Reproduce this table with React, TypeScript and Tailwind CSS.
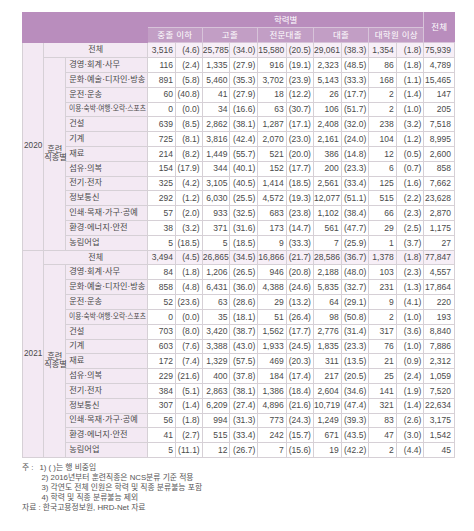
import React from "react";

type Row = [string, string[]];

const y2020Total = ["3,516", "(4.6)", "25,785", "(34.0)", "15,580", "(20.5)", "29,061", "(38.3)", "1,354", "(1.8)", "75,939"];
const y2020: Row[] = [
  ["경영·회계·사무", ["116", "(2.4)", "1,335", "(27.9)", "916", "(19.1)", "2,323", "(48.5)", "86", "(1.8)", "4,789"]],
  ["문화·예술·디자인·방송", ["891", "(5.8)", "5,460", "(35.3)", "3,702", "(23.9)", "5,143", "(33.3)", "168", "(1.1)", "15,465"]],
  ["운전·운송", ["60", "(40.8)", "41", "(27.9)", "18", "(12.2)", "26", "(17.7)", "2", "(1.4)", "147"]],
  ["이용·숙박·여행·오락·스포츠", ["0", "(0.0)", "34", "(16.6)", "63", "(30.7)", "106", "(51.7)", "2", "(1.0)", "205"]],
  ["건설", ["639", "(8.5)", "2,862", "(38.1)", "1,287", "(17.1)", "2,408", "(32.0)", "238", "(3.2)", "7,518"]],
  ["기계", ["725", "(8.1)", "3,816", "(42.4)", "2,070", "(23.0)", "2,161", "(24.0)", "104", "(1.2)", "8,995"]],
  ["재료", ["214", "(8.2)", "1,449", "(55.7)", "521", "(20.0)", "386", "(14.8)", "12", "(0.5)", "2,600"]],
  ["섬유·의복", ["154", "(17.9)", "344", "(40.1)", "152", "(17.7)", "200", "(23.3)", "6", "(0.7)", "858"]],
  ["전기·전자", ["325", "(4.2)", "3,105", "(40.5)", "1,414", "(18.5)", "2,561", "(33.4)", "125", "(1.6)", "7,662"]],
  ["정보통신", ["292", "(1.2)", "6,030", "(25.5)", "4,572", "(19.3)", "12,077", "(51.1)", "515", "(2.2)", "23,628"]],
  ["인쇄·목재·가구·공예", ["57", "(2.0)", "933", "(32.5)", "683", "(23.8)", "1,102", "(38.4)", "66", "(2.3)", "2,870"]],
  ["환경·에너지·안전", ["38", "(3.2)", "371", "(31.6)", "173", "(14.7)", "561", "(47.7)", "29", "(2.5)", "1,175"]],
  ["농림어업", ["5", "(18.5)", "5", "(18.5)", "9", "(33.3)", "7", "(25.9)", "1", "(3.7)", "27"]],
];

const y2021Total = ["3,494", "(4.5)", "26,865", "(34.5)", "16,866", "(21.7)", "28,586", "(36.7)", "1,378", "(1.8)", "77,847"];
const y2021: Row[] = [
  ["경영·회계·사무", ["84", "(1.8)", "1,206", "(26.5)", "946", "(20.8)", "2,188", "(48.0)", "103", "(2.3)", "4,557"]],
  ["문화·예술·디자인·방송", ["858", "(4.8)", "6,431", "(36.0)", "4,388", "(24.6)", "5,835", "(32.7)", "231", "(1.3)", "17,864"]],
  ["운전·운송", ["52", "(23.6)", "63", "(28.6)", "29", "(13.2)", "64", "(29.1)", "9", "(4.1)", "220"]],
  ["이용·숙박·여행·오락·스포츠", ["0", "(0.0)", "35", "(18.1)", "51", "(26.4)", "98", "(50.8)", "2", "(1.0)", "193"]],
  ["건설", ["703", "(8.0)", "3,420", "(38.7)", "1,562", "(17.7)", "2,776", "(31.4)", "317", "(3.6)", "8,840"]],
  ["기계", ["603", "(7.6)", "3,388", "(43.0)", "1,933", "(24.5)", "1,835", "(23.3)", "76", "(1.0)", "7,886"]],
  ["재료", ["172", "(7.4)", "1,329", "(57.5)", "469", "(20.3)", "311", "(13.5)", "21", "(0.9)", "2,312"]],
  ["섬유·의복", ["229", "(21.6)", "400", "(37.8)", "184", "(17.4)", "217", "(20.5)", "25", "(2.4)", "1,059"]],
  ["전기·전자", ["384", "(5.1)", "2,863", "(38.1)", "1,386", "(18.4)", "2,604", "(34.6)", "141", "(1.9)", "7,520"]],
  ["정보통신", ["307", "(1.4)", "6,209", "(27.4)", "4,896", "(21.6)", "10,719", "(47.4)", "321", "(1.4)", "22,634"]],
  ["인쇄·목재·가구·공예", ["56", "(1.8)", "994", "(31.3)", "773", "(24.3)", "1,249", "(39.3)", "83", "(2.6)", "3,175"]],
  ["환경·에너지·안전", ["41", "(2.7)", "515", "(33.4)", "242", "(15.7)", "671", "(43.5)", "47", "(3.0)", "1,542"]],
  ["농림어업", ["5", "(11.1)", "12", "(26.7)", "7", "(15.6)", "19", "(42.2)", "2", "(4.4)", "45"]],
];

const td =
  "border border-[#d6d0d6] text-right align-middle p-0 pr-[2px] text-[8.5px] leading-none text-[#4a4a4a] whitespace-nowrap overflow-hidden";
const lab = "border border-[#d6d0d6] bg-[#f3e9f3] align-middle p-0 text-[8.2px] leading-none text-[#4a4a4a]";

function DataCells({ vals }: { vals: string[] }) {
  return (
    <>
      {vals.map((v, i) => (
        <td key={i} className={`${td} bg-white ${i === 10 ? "pr-[3px]" : ""}`}>
          {v}
        </td>
      ))}
    </>
  );
}

function Group({ year, total, rows }: { year: string; total: string[]; rows: Row[] }) {
  return (
    <>
      <tr className="h-[14.82px]">
        <td rowSpan={rows.length + 1} className={`${lab} text-center text-[7.6px] border-t-[#b9b2b9]`}>
          {year}
        </td>
        <td colSpan={2} className={`${lab} text-center text-[8px] border-t-[#b9b2b9]`}>
          전체
        </td>
        {total.map((v, i) => (
          <td
            key={i}
            className={`${td} bg-[#f7eff7] border-t-[#b9b2b9] ${i === 10 ? "pr-[3px]" : ""}`}
          >
            {v}
          </td>
        ))}
      </tr>
      {rows.map(([name, vals], idx) => (
        <tr key={name} className="h-[14.82px]">
          {idx === 0 && (
            <td
              rowSpan={rows.length}
              className={`${lab} text-center text-[7px] leading-[10px] whitespace-nowrap`}
            >
              훈련
              <br />
              직종별
            </td>
          )}
          <td className={`${lab} pl-[3px] whitespace-nowrap`}>
            {name === "이용·숙박·여행·오락·스포츠" ? (
              <span className="inline-block origin-left scale-x-[0.82]">{name}</span>
            ) : (
              <span>{name}</span>
            )}
          </td>
          <DataCells vals={vals} />
        </tr>
      ))}
    </>
  );
}

export default function App() {
  return (
    <div className="w-[474px] h-[531px] bg-white pt-[12px] pl-[22px] font-['Liberation_Sans','Noto_Sans_CJK_KR',sans-serif]">
      <table className="table-fixed border-collapse w-[432px]">
        <colgroup>
          <col className="w-[21.3px]" />
          <col className="w-[22px]" />
          <col className="w-[81.7px]" />
          <col className="w-[28px]" />
          <col className="w-[26.7px]" />
          <col className="w-[27.8px]" />
          <col className="w-[27.8px]" />
          <col className="w-[28.4px]" />
          <col className="w-[27.3px]" />
          <col className="w-[27.7px]" />
          <col className="w-[27.6px]" />
          <col className="w-[27.4px]" />
          <col className="w-[27.6px]" />
          <col className="w-[30.7px]" />
        </colgroup>
        <thead>
          <tr className="h-[14.7px]">
            <th colSpan={3} rowSpan={2} className="bg-[#b98dbd] border border-[#b98dbd] p-0"></th>
            <th
              colSpan={10}
              className="bg-[#b98dbd] border border-[#d7c3d9] border-t-[#b98dbd] p-0 text-[8.5px] font-normal text-white leading-none text-center"
            >
              학력별
            </th>
            <th
              rowSpan={2}
              className="bg-[#b98dbd] border border-[#d7c3d9] border-t-[#b98dbd] border-r-[#b98dbd] p-0 text-[8.5px] font-normal text-white leading-none text-center"
            >
              전체
            </th>
          </tr>
          <tr className="h-[15.6px]">
            {["중졸 이하", "고졸", "전문대졸", "대졸", "대학원 이상"].map((h) => (
              <th
                key={h}
                colSpan={2}
                className="bg-[#c29ec5] border border-[#d7c3d9] p-0 text-[8.5px] font-normal text-white leading-none text-center tracking-[0.3px]"
              >
                {h}
              </th>
            ))}
          </tr>
        </thead>
        <tbody>
          <Group year="2020" total={y2020Total} rows={y2020} />
          <Group year="2021" total={y2021Total} rows={y2021} />
        </tbody>
      </table>
      <div className="mt-[5px] text-[7.8px] leading-[10.1px] text-[#555]">
        <div className="flex">
          <span className="w-[17.5px] whitespace-pre">주 :</span>
          <span>1) ( )는 행 비중임</span>
        </div>
        <div className="pl-[19.5px]">2) 2016년부터 훈련직종은 NCS분류 기준 적용</div>
        <div className="pl-[19.5px]">3) 각연도 전체 인원은 학력 및 직종 분류불능 포함</div>
        <div className="pl-[19.5px]">4) 학력 및 직종 분류불능 제외</div>
        <div>자료 : 한국고용정보원, HRD-Net 자료</div>
      </div>
    </div>
  );
}
